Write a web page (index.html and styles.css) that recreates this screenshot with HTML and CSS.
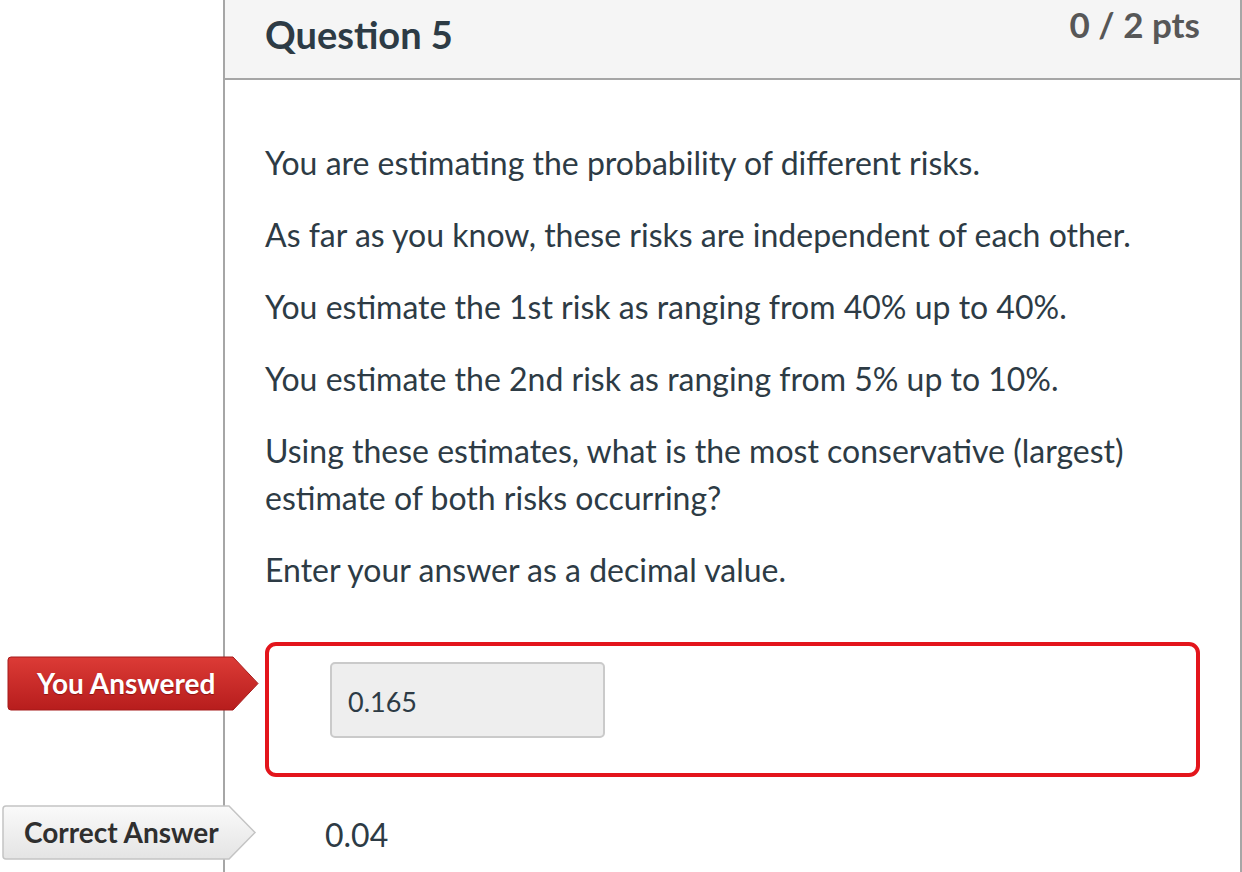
FILE: index.html
```html
<!DOCTYPE html>
<html>
<head>
<meta charset="utf-8">
<link rel="stylesheet" href="styles.css">
</head>
<body>
<div class="question">
  <div class="q-header">
    <h2 class="q-title">Question 5</h2>
    <div class="q-pts">0 / 2 pts</div>
  </div>
  <div class="q-body">
    <div class="q-text">
      <p>You are estimating the probability of different risks.</p>
      <p>As far as you know, these risks are independent of each other.</p>
      <p>You estimate the 1st risk as ranging from 40% up to 40%.</p>
      <p>You estimate the 2nd risk as ranging from 5% up to 10%.</p>
      <p>Using these estimates, what is the most conservative (largest) estimate of both risks occurring?</p>
      <p>Enter your answer as a decimal value.</p>
    </div>
    <div class="answers">
      <div class="answer wrong">
        <div class="badge badge-red">
          <svg class="badge-shape" width="253" height="55" viewBox="0 0 253 55">
            <defs>
              <linearGradient id="gr" x1="0" y1="0" x2="0" y2="1">
                <stop offset="0" stop-color="#dc3b36"/>
                <stop offset="1" stop-color="#b71d1d"/>
              </linearGradient>
            </defs>
            <path d="M4,1 H226 L251,27.5 L226,54 H4 Q1,54 1,51 V4 Q1,1 4,1 Z" fill="url(#gr)" stroke="#a51a1a" stroke-width="1"/>
          </svg>
          <span class="badge-label">You Answered</span>
        </div>
        <div class="answer-input">0.165</div>
      </div>
      <div class="answer correct">
        <div class="badge badge-gray">
          <svg class="badge-shape" width="255" height="55" viewBox="0 0 255 55">
            <defs>
              <linearGradient id="gg" x1="0" y1="0" x2="0" y2="1">
                <stop offset="0" stop-color="#fafafa"/>
                <stop offset="1" stop-color="#e4e4e4"/>
              </linearGradient>
            </defs>
            <path d="M4,1 H227 L253,27.5 L227,54 H4 Q1,54 1,51 V4 Q1,1 4,1 Z" fill="url(#gg)" stroke="#c4c4c4" stroke-width="1.5"/>
          </svg>
          <span class="badge-label">Correct Answer</span>
        </div>
        <div class="answer-text">0.04</div>
      </div>
    </div>
  </div>
</div>
</body>
</html>
```

FILE: styles.css
```css
html, body {
  margin: 0;
  padding: 0;
  background: #ffffff;
}
body {
  font-family: Lato, "Open Sans", sans-serif;
  color: #2d3b45;
  overflow: hidden;
  height: 872px;
}
.question {
  position: relative;
  margin-left: 223px;
  width: 1015px;
  min-height: 900px;
  border-left: 2px solid #a6a6a6;
  border-right: 2px solid #a6a6a6;
}
.q-header {
  height: 78px;
  background: #f5f5f5;
  border-bottom: 2px solid #a6a6a6;
  display: flex;
  justify-content: space-between;
  align-items: flex-start;
  padding: 0 40px 0 40px;
}
.q-title {
  margin: 0;
  padding-top: 11px;
  font-size: 38px;
  line-height: 46px;
  font-weight: 700;
  color: #2d3b45;
}
.q-pts {
  padding-top: 3px;
  font-size: 35px;
  line-height: 42px;
  font-weight: 700;
  color: #575757;
}
.q-body {
  padding: 59px 40px 0 40px;
}
.q-text p {
  margin: 0 0 25px 0;
  font-size: 32px;
  line-height: 47px;
}
.q-text p:last-child {
  margin-bottom: 0;
}
.answers {
  margin-top: 49px;
  display: flex;
  flex-direction: column;
  gap: 29px;
}
.answer {
  position: relative;
}
.answer.wrong {
  box-sizing: border-box;
  height: 135px;
  border: 4px solid #e3151c;
  border-radius: 11px;
  padding: 16px 0 0 61px;
}
.answer-input {
  box-sizing: border-box;
  width: 275px;
  height: 76px;
  background: #eeeeee;
  border: 2px solid #cacaca;
  border-radius: 5px;
  padding: 3px 0 0 16px;
  display: flex;
  align-items: center;
  font-size: 27px;
  color: #2d3b45;
}
.answer.correct {
  height: 53px;
  display: flex;
  align-items: center;
  padding-left: 60px;
}
.answer-text {
  font-size: 32px;
  line-height: 53px;
  padding-top: 4px;
}
.badge {
  position: absolute;
  display: grid;
  align-items: center;
}
.badge > * {
  grid-area: 1 / 1;
}
.badge-red {
  left: -262px;
  top: 10px;
}
.badge-gray {
  left: -263px;
  top: -1px;
}
.badge-label {
  font-size: 28px;
  font-weight: 700;
  line-height: 55px;
  position: relative;
}
.badge-red .badge-label {
  color: #ffffff;
  padding-left: 30px;
  text-shadow: 0 1px 1px rgba(90, 0, 0, 0.5);
}
.badge-gray .badge-label {
  color: #2f2f2f;
  padding-left: 22px;
}
.badge-shape {
  display: block;
}
```
